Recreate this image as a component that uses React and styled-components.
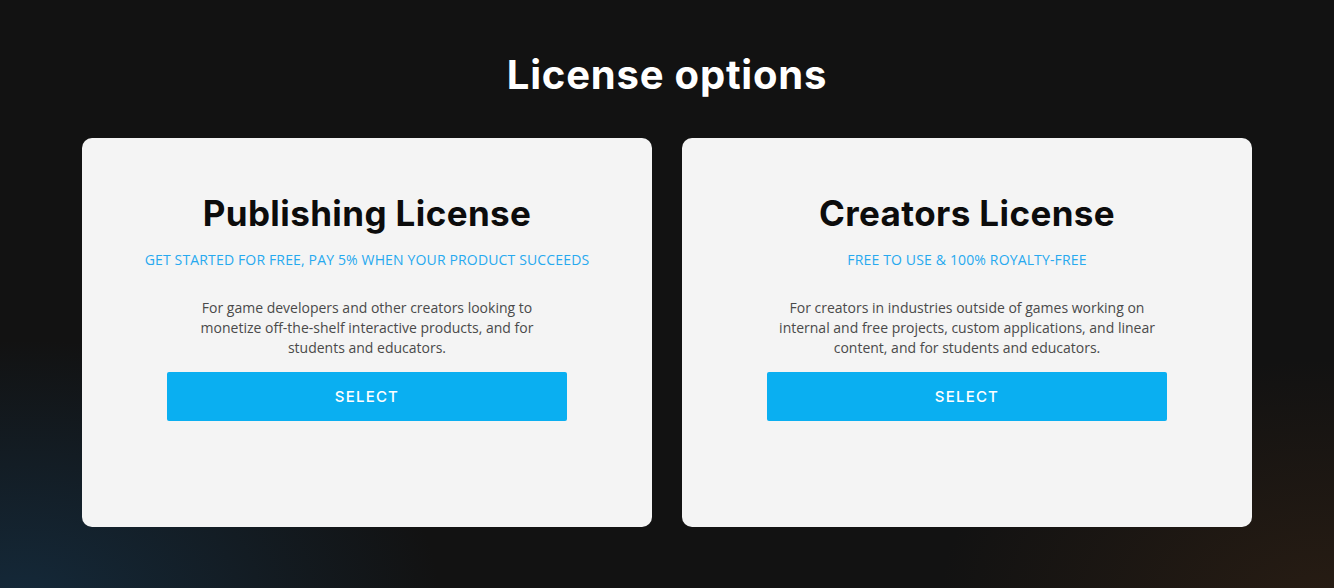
import styled, { createGlobalStyle } from "styled-components";

const Global = createGlobalStyle`
  html, body {
    margin: 0;
    padding: 0;
    background: #121212;
  }
  * { box-sizing: border-box; }
`

const Page = styled.section`
  position: relative;
  width: 100%;
  height: 588px;
  overflow: hidden;
  background:
    radial-gradient(ellipse 420px 260px at 20px 600px, rgba(22, 60, 90, 0.55), rgba(18, 18, 18, 0) 100%),
    radial-gradient(ellipse 380px 240px at 1320px 600px, rgba(60, 38, 20, 0.5), rgba(18, 18, 18, 0) 100%),
    #121212;
  display: flex;
  flex-direction: column;
  align-items: center;
  padding-top: 48px;
  font-family: "Open Sans", sans-serif;
`

const Heading = styled.h2`
  margin: 0;
  color: #fff;
  font-family: Inter, "Noto Sans", sans-serif;
  font-weight: 700;
  font-size: 40px;
  line-height: 54px;
  letter-spacing: 0.8px;
`

const CardRow = styled.div`
  display: flex;
  gap: 30px;
  margin-top: 36px;
`

const Card = styled.div`
  width: 570px;
  height: 389px;
  background: #f4f4f4;
  border-radius: 10px;
  display: flex;
  flex-direction: column;
  align-items: center;
  padding-top: 53px;
  text-align: center;
`

const Title = styled.h3`
  margin: 0;
  color: #0c0c0c;
  font-family: Inter, "Noto Sans", sans-serif;
  font-weight: 700;
  font-size: 35px;
  line-height: 44px;
  letter-spacing: 0.4px;
`

const Tagline = styled.p`
  margin: 15px 0 0;
  color: #27a9ef;
  font-size: 14px;
  line-height: 20px;
  letter-spacing: 0.15px;
  text-transform: uppercase;
`

const Blurb = styled.p`
  margin: 28px 0 0;
  max-width: 385px;
  color: #4a4a4a;
  font-size: 14px;
  line-height: 20px;
`

const SelectButton = styled.button`
  margin-top: 14px;
  width: 400px;
  height: 49px;
  border: 0;
  border-radius: 2px;
  background: #0aaff1;
  color: #fff;
  font-family: Inter, "Noto Sans", sans-serif;
  font-size: 15px;
  font-weight: 500;
  letter-spacing: 1.2px;
  cursor: pointer;
`

const licenses = [
  {
    title: "Publishing License",
    tag: "Get started for free, pay 5% when your product succeeds",
    text: "For game developers and other creators looking to monetize off-the-shelf interactive products, and for students and educators.",
  },
  {
    title: "Creators License",
    tag: "Free to use & 100% royalty-free",
    text: "For creators in industries outside of games working on internal and free projects, custom applications, and linear content, and for students and educators.",
  },
]

const App = () => {
  return <Page>
    <Global />
    <Heading>License options</Heading>
    <CardRow>
      {licenses.map(l => (
        <Card key={l.title}>
          <Title>{l.title}</Title>
          <Tagline>{l.tag}</Tagline>
          <Blurb>{l.text}</Blurb>
          <SelectButton>SELECT</SelectButton>
        </Card>
      ))}
    </CardRow>
  </Page>
}

export default App;
